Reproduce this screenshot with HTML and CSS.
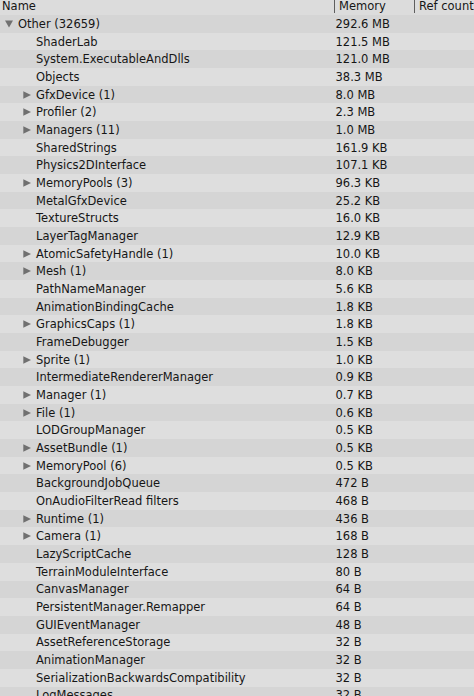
FILE: index.html
```html
<!DOCTYPE html>
<html>
<head>
<meta charset="utf-8">
<link rel="stylesheet" href="styles.css">
</head>
<body>
<div class="table">
  <div class="head">
    <div class="hcell hname">Name</div>
    <div class="hcell hcol">Memory</div>
    <div class="hcell hcol">Ref count</div>
  </div>
  <div class="rows">
    <div class="row"><div class="name d0"><span class="tw"><svg width="8" height="8" viewBox="0 0 8 8"><polygon points="0,0.6 8,0.6 4,7.6" fill="#707070"/></svg></span>Other (32659)</div><div class="mem">292.6 MB</div><div></div></div>
    <div class="row"><div class="name d1"><span class="tw"></span>ShaderLab</div><div class="mem">121.5 MB</div><div></div></div>
    <div class="row"><div class="name d1"><span class="tw"></span>System.ExecutableAndDlls</div><div class="mem">121.0 MB</div><div></div></div>
    <div class="row"><div class="name d1"><span class="tw"></span>Objects</div><div class="mem">38.3 MB</div><div></div></div>
    <div class="row"><div class="name d1"><span class="tw"><svg width="8" height="8" viewBox="0 0 8 8"><polygon points="0.3,0.2 8,4 0.3,7.8" fill="#707070"/></svg></span>GfxDevice (1)</div><div class="mem">8.0 MB</div><div></div></div>
    <div class="row"><div class="name d1"><span class="tw"><svg width="8" height="8" viewBox="0 0 8 8"><polygon points="0.3,0.2 8,4 0.3,7.8" fill="#707070"/></svg></span>Profiler (2)</div><div class="mem">2.3 MB</div><div></div></div>
    <div class="row"><div class="name d1"><span class="tw"><svg width="8" height="8" viewBox="0 0 8 8"><polygon points="0.3,0.2 8,4 0.3,7.8" fill="#707070"/></svg></span>Managers (11)</div><div class="mem">1.0 MB</div><div></div></div>
    <div class="row"><div class="name d1"><span class="tw"></span>SharedStrings</div><div class="mem">161.9 KB</div><div></div></div>
    <div class="row"><div class="name d1"><span class="tw"></span>Physics2DInterface</div><div class="mem">107.1 KB</div><div></div></div>
    <div class="row"><div class="name d1"><span class="tw"><svg width="8" height="8" viewBox="0 0 8 8"><polygon points="0.3,0.2 8,4 0.3,7.8" fill="#707070"/></svg></span>MemoryPools (3)</div><div class="mem">96.3 KB</div><div></div></div>
    <div class="row"><div class="name d1"><span class="tw"></span>MetalGfxDevice</div><div class="mem">25.2 KB</div><div></div></div>
    <div class="row"><div class="name d1"><span class="tw"></span>TextureStructs</div><div class="mem">16.0 KB</div><div></div></div>
    <div class="row"><div class="name d1"><span class="tw"></span>LayerTagManager</div><div class="mem">12.9 KB</div><div></div></div>
    <div class="row"><div class="name d1"><span class="tw"><svg width="8" height="8" viewBox="0 0 8 8"><polygon points="0.3,0.2 8,4 0.3,7.8" fill="#707070"/></svg></span>AtomicSafetyHandle (1)</div><div class="mem">10.0 KB</div><div></div></div>
    <div class="row"><div class="name d1"><span class="tw"><svg width="8" height="8" viewBox="0 0 8 8"><polygon points="0.3,0.2 8,4 0.3,7.8" fill="#707070"/></svg></span>Mesh (1)</div><div class="mem">8.0 KB</div><div></div></div>
    <div class="row"><div class="name d1"><span class="tw"></span>PathNameManager</div><div class="mem">5.6 KB</div><div></div></div>
    <div class="row"><div class="name d1"><span class="tw"></span>AnimationBindingCache</div><div class="mem">1.8 KB</div><div></div></div>
    <div class="row"><div class="name d1"><span class="tw"><svg width="8" height="8" viewBox="0 0 8 8"><polygon points="0.3,0.2 8,4 0.3,7.8" fill="#707070"/></svg></span>GraphicsCaps (1)</div><div class="mem">1.8 KB</div><div></div></div>
    <div class="row"><div class="name d1"><span class="tw"></span>FrameDebugger</div><div class="mem">1.5 KB</div><div></div></div>
    <div class="row"><div class="name d1"><span class="tw"><svg width="8" height="8" viewBox="0 0 8 8"><polygon points="0.3,0.2 8,4 0.3,7.8" fill="#707070"/></svg></span>Sprite (1)</div><div class="mem">1.0 KB</div><div></div></div>
    <div class="row"><div class="name d1"><span class="tw"></span>IntermediateRendererManager</div><div class="mem">0.9 KB</div><div></div></div>
    <div class="row"><div class="name d1"><span class="tw"><svg width="8" height="8" viewBox="0 0 8 8"><polygon points="0.3,0.2 8,4 0.3,7.8" fill="#707070"/></svg></span>Manager (1)</div><div class="mem">0.7 KB</div><div></div></div>
    <div class="row"><div class="name d1"><span class="tw"><svg width="8" height="8" viewBox="0 0 8 8"><polygon points="0.3,0.2 8,4 0.3,7.8" fill="#707070"/></svg></span>File (1)</div><div class="mem">0.6 KB</div><div></div></div>
    <div class="row"><div class="name d1"><span class="tw"></span>LODGroupManager</div><div class="mem">0.5 KB</div><div></div></div>
    <div class="row"><div class="name d1"><span class="tw"><svg width="8" height="8" viewBox="0 0 8 8"><polygon points="0.3,0.2 8,4 0.3,7.8" fill="#707070"/></svg></span>AssetBundle (1)</div><div class="mem">0.5 KB</div><div></div></div>
    <div class="row"><div class="name d1"><span class="tw"><svg width="8" height="8" viewBox="0 0 8 8"><polygon points="0.3,0.2 8,4 0.3,7.8" fill="#707070"/></svg></span>MemoryPool (6)</div><div class="mem">0.5 KB</div><div></div></div>
    <div class="row"><div class="name d1"><span class="tw"></span>BackgroundJobQueue</div><div class="mem">472 B</div><div></div></div>
    <div class="row"><div class="name d1"><span class="tw"></span>OnAudioFilterRead filters</div><div class="mem">468 B</div><div></div></div>
    <div class="row"><div class="name d1"><span class="tw"><svg width="8" height="8" viewBox="0 0 8 8"><polygon points="0.3,0.2 8,4 0.3,7.8" fill="#707070"/></svg></span>Runtime (1)</div><div class="mem">436 B</div><div></div></div>
    <div class="row"><div class="name d1"><span class="tw"><svg width="8" height="8" viewBox="0 0 8 8"><polygon points="0.3,0.2 8,4 0.3,7.8" fill="#707070"/></svg></span>Camera (1)</div><div class="mem">168 B</div><div></div></div>
    <div class="row"><div class="name d1"><span class="tw"></span>LazyScriptCache</div><div class="mem">128 B</div><div></div></div>
    <div class="row"><div class="name d1"><span class="tw"></span>TerrainModuleInterface</div><div class="mem">80 B</div><div></div></div>
    <div class="row"><div class="name d1"><span class="tw"></span>CanvasManager</div><div class="mem">64 B</div><div></div></div>
    <div class="row"><div class="name d1"><span class="tw"></span>PersistentManager.Remapper</div><div class="mem">64 B</div><div></div></div>
    <div class="row"><div class="name d1"><span class="tw"></span>GUIEventManager</div><div class="mem">48 B</div><div></div></div>
    <div class="row"><div class="name d1"><span class="tw"></span>AssetReferenceStorage</div><div class="mem">32 B</div><div></div></div>
    <div class="row"><div class="name d1"><span class="tw"></span>AnimationManager</div><div class="mem">32 B</div><div></div></div>
    <div class="row"><div class="name d1"><span class="tw"></span>SerializationBackwardsCompatibility</div><div class="mem">32 B</div><div></div></div>
    <div class="row"><div class="name d1"><span class="tw"></span>LogMessages</div><div class="mem">32 B</div><div></div></div>
  </div>
</div>
</body>
</html>
```
FILE: styles.css
```css
html, body {
  margin: 0;
  padding: 0;
  background: #dedede;
}
body {
  width: 474px;
  height: 696px;
  overflow: hidden;
  font-family: "DejaVu Sans", "Liberation Sans", sans-serif;
  font-size: 11.5px;
  color: #161616;
}
.table {
  display: flex;
  flex-direction: column;
}
.head {
  display: grid;
  grid-template-columns: 334px 80px 1fr;
  height: 15px;
  background: #dcdcdc;
  align-items: start;
}
.hcell {
  line-height: 13px;
  white-space: nowrap;
  overflow: hidden;
}
.hname {
  padding-left: 2px;
}
.hcol {
  border-left: 1px solid #5e5e5e;
  padding-left: 4px;
  height: 13px;
}
.row {
  display: grid;
  grid-template-columns: 334px 80px 1fr;
  height: 17.68px;
  align-items: center;
  background: #dedede;
}
.row:nth-child(odd) {
  background: #d5d5d5;
}
.name {
  display: flex;
  align-items: center;
  white-space: nowrap;
  overflow: hidden;
}
.d0 { padding-left: 5px; }
.d1 { padding-left: 23px; }
.tw {
  display: inline-flex;
  width: 13px;
  flex: none;
  align-items: center;
}
.tw svg { display: block; }
.mem {
  padding-left: 1.5px;
  white-space: nowrap;
}
```
